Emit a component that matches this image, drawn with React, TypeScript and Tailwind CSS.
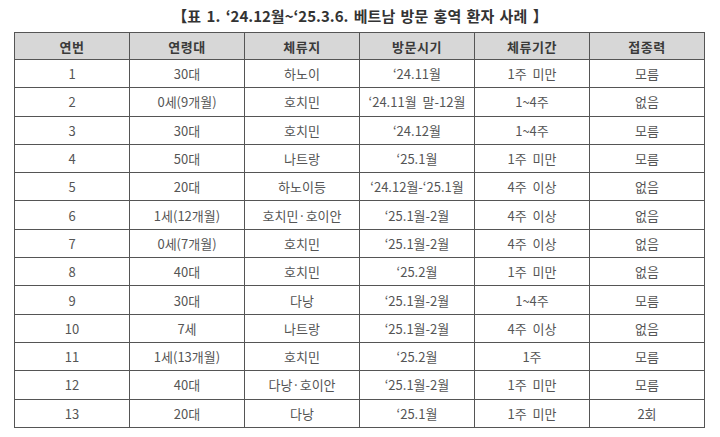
const rows: string[][] = [
  ['1', '30대', '하노이', '‘24.11월', '1주 미만', '모름'],
  ['2', '0세(9개월)', '호치민', '‘24.11월 말-12월', '1~4주', '없음'],
  ['3', '30대', '호치민', '‘24.12월', '1~4주', '모름'],
  ['4', '50대', '나트랑', '‘25.1월', '1주 미만', '모름'],
  ['5', '20대', '하노이등', '‘24.12월-‘25.1월', '4주 이상', '없음'],
  ['6', '1세(12개월)', '호치민·호이안', '‘25.1월-2월', '4주 이상', '없음'],
  ['7', '0세(7개월)', '호치민', '‘25.1월-2월', '4주 이상', '없음'],
  ['8', '40대', '호치민', '‘25.2월', '1주 미만', '없음'],
  ['9', '30대', '다낭', '‘25.1월-2월', '1~4주', '모름'],
  ['10', '7세', '나트랑', '‘25.1월-2월', '4주 이상', '없음'],
  ['11', '1세(13개월)', '호치민', '‘25.2월', '1주', '모름'],
  ['12', '40대', '다낭·호이안', '‘25.1월-2월', '1주 미만', '모름'],
  ['13', '20대', '다낭', '‘25.1월', '1주 미만', '2회'],
];

const headers = ['연번', '연령대', '체류지', '방문시기', '체류기간', '접종력'];

export default function App() {
  return (
    <div
      className="w-[720px] h-[437px] bg-white overflow-hidden"
      style={{ fontFamily: '"Noto Sans CJK KR", "Noto Sans", sans-serif' }}
    >
      <div className="h-[32px] flex items-center justify-center text-[15px] font-bold text-[#333] pt-[1px] [word-spacing:2px]">
        【표 1. ‘24.12월~‘25.3.6. 베트남 방문 홍역 환자 사례 】
      </div>
      <table className="ml-[14px] w-[691px] table-fixed border-collapse border-[1.5px] border-[#4a4a4a]">
        <thead>
          <tr className="h-[27px] bg-[#d7d7d7]">
            {headers.map((h) => (
              <th
                key={h}
                className="border border-[#555] text-[13px] font-bold text-[#3a3a3a] text-center p-0 leading-none tracking-[0.5px]"
              >
                {h}
              </th>
            ))}
          </tr>
        </thead>
        <tbody>
          {rows.map((r) => (
            <tr key={r[0]} className="h-[28.3px]">
              {r.map((c, i) => (
                <td
                  key={i}
                  className="border border-[#555] text-[13px] text-[#555] text-center p-0 leading-none [word-spacing:3px]"
                >
                  {c}
                </td>
              ))}
            </tr>
          ))}
        </tbody>
      </table>
    </div>
  );
}
